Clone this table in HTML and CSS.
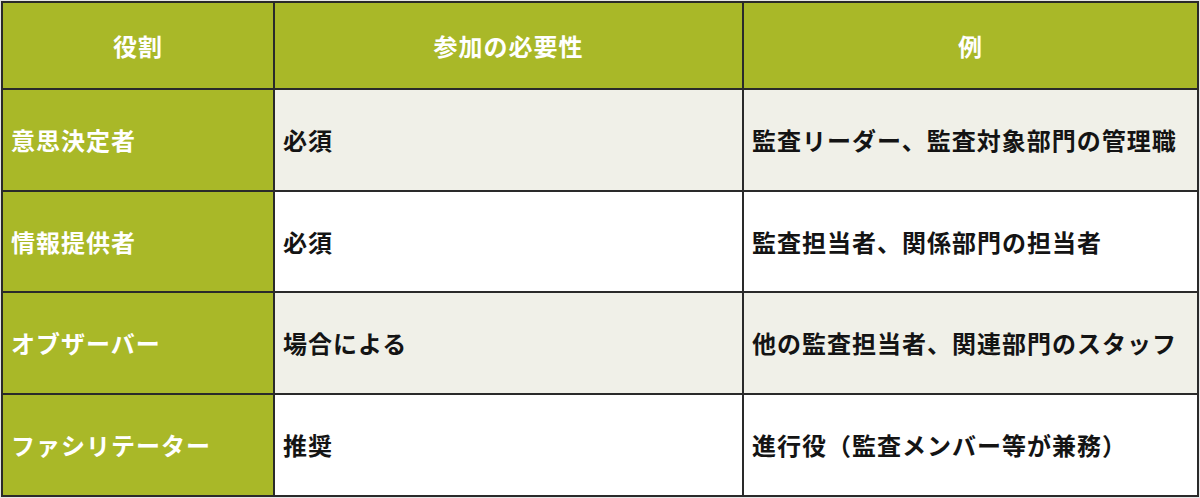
FILE: index.html
```html
<!DOCTYPE html>
<html lang="ja">
<head>
<meta charset="utf-8">
<link rel="stylesheet" href="styles.css">
</head>
<body>
<table class="roles">
  <colgroup>
    <col class="c1"><col class="c2"><col class="c3">
  </colgroup>
  <thead>
    <tr class="head">
      <th>役割</th>
      <th>参加の必要性</th>
      <th>例</th>
    </tr>
  </thead>
  <tbody>
    <tr class="shade r1">
      <th>意思決定者</th>
      <td>必須</td>
      <td>監査リーダー、監査対象部門の管理職</td>
    </tr>
    <tr class="r2">
      <th>情報提供者</th>
      <td>必須</td>
      <td>監査担当者、関係部門の担当者</td>
    </tr>
    <tr class="shade r3">
      <th>オブザーバー</th>
      <td>場合による</td>
      <td>他の監査担当者、関連部門のスタッフ</td>
    </tr>
    <tr class="r4">
      <th>ファシリテーター</th>
      <td>推奨</td>
      <td>進行役（監査メンバー等が兼務）</td>
    </tr>
  </tbody>
</table>
</body>
</html>
```

FILE: styles.css
```css
html, body {
  margin: 0;
  padding: 0;
  background: #e6e6e6;
}
body {
  padding: 1px 0 0 1px;
  font-family: "Noto Sans CJK JP", "Noto Sans", sans-serif;
}
.roles {
  border-collapse: collapse;
  table-layout: fixed;
  width: 1196px;
  border: 2px solid #2a2a2a;
  background: #ffffff;
}
.c1 { width: 272px; }
.c2 { width: 469px; }
.c3 { width: 455px; }
.roles th,
.roles td {
  border: 2px solid #2a2a2a;
  padding: 0 8px;
  font-size: 24px;
  font-weight: 700;
  line-height: 1;
  letter-spacing: 1px;
  vertical-align: middle;
  text-align: left;
  white-space: nowrap;
  overflow: hidden;
}
.roles td { color: #141414; }
.roles th {
  background: #a9b828;
  color: #ffffff;
}
.head th {
  text-align: center;
}
.head { height: 87px; }
.r1 { height: 102px; }
.r2 { height: 101px; }
.r3 { height: 102px; }
.r4 { height: 102px; }
.shade td { background: #f0f0e8; }
```
